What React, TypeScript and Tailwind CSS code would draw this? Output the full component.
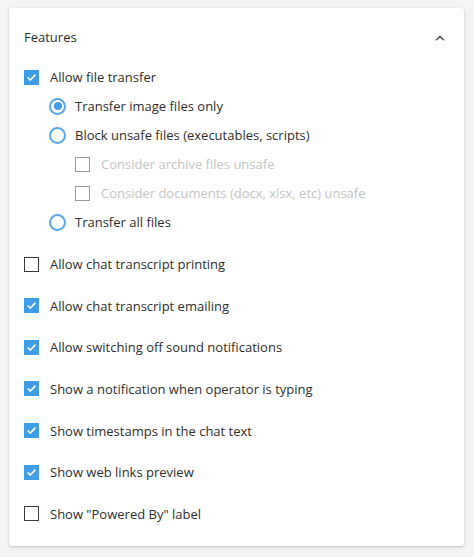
import React from "react";

const font = { fontFamily: '"Open Sans", "Noto Sans", sans-serif' };

const Check = ({ checked, disabled }: { checked?: boolean; disabled?: boolean }) =>
  checked ? (
    <span className="w-[15px] h-[15px] bg-[#3f9de8] flex items-center justify-center shrink-0">
      <svg width="11" height="11" viewBox="0 0 12 12" fill="none">
        <path d="M2.2 6.3 4.8 8.8 9.8 3.4" stroke="white" strokeWidth="1.7" strokeLinecap="round" strokeLinejoin="round" />
      </svg>
    </span>
  ) : (
    <span
      className={`w-[15px] h-[15px] border shrink-0 bg-white ${
        disabled ? "border-[#9a9a9a]" : "border-[#3a3a3a]"
      }`}
    />
  );

const Radio = ({ checked }: { checked?: boolean }) => (
  <span className="w-[17px] h-[17px] rounded-full border-2 border-[#5aa7e6] flex items-center justify-center shrink-0 bg-white">
    {checked && <span className="w-[8px] h-[8px] rounded-full bg-[#3f9de8]" />}
  </span>
);

const Row = ({
  children,
  label,
  className = "",
  disabled,
}: {
  children: React.ReactNode;
  label: string;
  className?: string;
  disabled?: boolean;
}) => (
  <div className={`flex items-center h-[20px] ${className}`}>
    {children}
    <span className={`text-[13px] leading-[20px] ${disabled ? "text-[#c4c4c4]" : "text-[#2e2e2e]"}`}>{label}</span>
  </div>
);

const options = [
  { label: "Allow chat transcript emailing", checked: true },
  { label: "Allow switching off sound notifications", checked: true },
  { label: "Show a notification when operator is typing", checked: true },
  { label: "Show timestamps in the chat text", checked: true },
  { label: "Show web links preview", checked: true },
  { label: 'Show "Powered By" label', checked: false },
];

export default function App() {
  return (
    <div className="w-[474px] h-[557px] bg-[#f4f4f4] pt-[8px] pl-[9px]" style={font}>
      <div className="w-[455px] bg-white rounded-[3px] shadow-[0_1px_3px_rgba(0,0,0,0.22)] pt-[20px] pb-[22px] px-[15px]">
        <div className="flex items-center justify-between h-[20px]">
          <span className="text-[13px] text-[#2e2e2e]">Features</span>
          <svg width="12" height="12" viewBox="0 0 12 12" fill="none" className="mr-[3px]">
            <path d="M2.5 7.8 6 4.3 9.5 7.8" stroke="#555" strokeWidth="1.5" strokeLinecap="round" strokeLinejoin="round" />
          </svg>
        </div>

        <Row label="Allow file transfer" className="mt-[19px]">
          <span className="mr-[11px] flex">
            <Check checked />
          </span>
        </Row>
        <div className="pl-[25px]">
          <Row label="Transfer image files only" className="mt-[9px]">
            <span className="mr-[9px] flex">
              <Radio checked />
            </span>
          </Row>
          <Row label="Block unsafe files (executables, scripts)" className="mt-[9px]">
            <span className="mr-[9px] flex">
              <Radio />
            </span>
          </Row>
          <div className="pl-[26px]">
            <Row label="Consider archive files unsafe" className="mt-[9px]" disabled>
              <span className="mr-[11px] flex">
                <Check disabled />
              </span>
            </Row>
            <Row label="Consider documents (docx, xlsx, etc) unsafe" className="mt-[9px]" disabled>
              <span className="mr-[11px] flex">
                <Check disabled />
              </span>
            </Row>
          </div>
          <Row label="Transfer all files" className="mt-[9px]">
            <span className="mr-[9px] flex">
              <Radio />
            </span>
          </Row>
        </div>

        <Row label="Allow chat transcript printing" className="mt-[22px]">
          <span className="mr-[11px] flex">
            <Check />
          </span>
        </Row>
        {options.map((o) => (
          <Row key={o.label} label={o.label} className="mt-[21.67px]">
            <span className="mr-[11px] flex">
              <Check checked={o.checked} />
            </span>
          </Row>
        ))}
      </div>
    </div>
  );
}
